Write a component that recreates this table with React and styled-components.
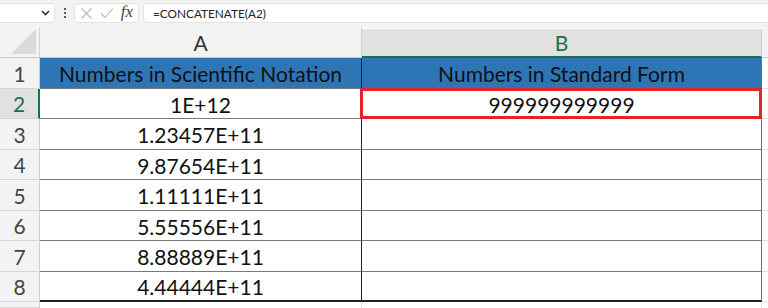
import React from 'react'
import styled, { createGlobalStyle } from 'styled-components'

const GlobalStyle = createGlobalStyle`
  html, body {
    margin: 0;
    padding: 0;
    background: #fff;
  }
  body {
    font-family: Lato, "Open Sans", sans-serif;
  }
`

const Window = styled.div`
  width: 768px;
  height: 308px;
  overflow: hidden;
  background: #f3f3f3;
`

const FormulaBar = styled.div`
  height: 28px;
  box-sizing: border-box;
  padding-top: 3px;
  display: flex;
  align-items: flex-start;
`

const Box = styled.div`
  height: 20px;
  box-sizing: border-box;
  background: #fff;
  border: 1px solid #e3e3e3;
  border-radius: 4px;
  display: flex;
  align-items: center;
`

const NameBox = styled(Box)`
  width: 59px;
  margin-left: -4px;
  justify-content: flex-end;
  padding-right: 4px;
`

const Dots = styled.div`
  width: 20px;
  display: flex;
  flex-direction: column;
  align-items: center;
  gap: 2px;
  padding-top: 5px;

  span {
    width: 2px;
    height: 2px;
    background: #5a5a5a;
  }
`

const ButtonBox = styled(Box)`
  width: 65px;
  margin-left: -1px;
  padding: 0 5px 0 5px;
  justify-content: space-between;
`

const Fx = styled.span`
  font-family: "Liberation Serif", serif;
  font-style: italic;
  font-size: 17px;
  color: #444;
  line-height: 1;
  margin-top: -3px;
`

const FormulaInput = styled(Box)`
  flex: 1;
  margin-left: 4px;
  margin-right: -6px;
  padding-left: 9px;
  font-family: Lato, "Open Sans", sans-serif;
  font-size: 11.8px;
  color: #222;
`

const Sheet = styled.div`
  display: grid;
  grid-template-columns: 40px 322px 400px 6px;
  grid-template-rows: 30px 31px 30px 31px 30px 31px 30px 31px 30px 6px;
  background: #fff;
  font-size: 21px;
`

const Corner = styled.div`
  background: #f3f3f3;
  border-right: 1px solid #d0d0d0;
  border-bottom: 1px solid #c8c8c8;
  display: flex;
  align-items: flex-end;
  justify-content: flex-end;
  padding: 0 3px 3px 0;
`

const ColHead = styled.div`
  box-sizing: border-box;
  display: flex;
  align-items: center;
  justify-content: center;
  color: ${({ $active }) => ($active ? '#1e7145' : '#333')};
  background: ${({ $active }) => ($active ? '#e1e1e1' : '#f3f3f3')};
  border-right: 1px solid #cfcfcf;
  border-bottom: ${({ $active }) => ($active ? '2px solid #1e7145' : '1px solid #c8c8c8')};
  margin-top: ${({ $active }) => ($active ? '1px' : '0')};
`

const RowHead = styled.div`
  box-sizing: border-box;
  display: flex;
  align-items: center;
  justify-content: center;
  color: ${({ $active }) => ($active ? '#1e7145' : '#444')};
  background: ${({ $active }) => ($active ? '#e1e1e1' : '#f3f3f3')};
  border-right: ${({ $active }) => ($active ? '2px solid #1e7145' : '1px solid #cfcfcf')};
  border-bottom: 1px solid #d6d6d6;
`

const Cell = styled.div`
  position: relative;
  box-sizing: border-box;
  display: flex;
  align-items: center;
  justify-content: center;
  color: #111;
  background: ${({ $head }) => ($head ? '#2e75b6' : '#fff')};
  border-right: ${({ $sep }) => ($sep ? '1.5px solid #222' : '1px solid #6e6e6e')};
  border-bottom: ${({ $last }) => ($last ? '2px solid #222' : '1px solid #7a7a7a')};
  padding-top: 1px;
`

const Grid = styled.div`
  box-sizing: border-box;
  background: #fff;
  border-right: ${({ $col }) => ($col ? '1px solid #e0e0e0' : 'none')};
  border-bottom: ${({ $row }) => ($row ? '1px solid #e0e0e0' : 'none')};
`

const EdgeHead = styled.div`
  background: #f3f3f3;
  border-bottom: 1px solid #c8c8c8;
`

const Selection = styled.div`
  position: absolute;
  top: -1px;
  left: -2px;
  right: -1px;
  bottom: -1px;
  border: 3px solid #e8212b;
  pointer-events: none;
`

const values = [
  '1E+12',
  '1.23457E+11',
  '9.87654E+11',
  '1.11111E+11',
  '5.55556E+11',
  '8.88889E+11',
  '4.44444E+11'
]

const Cross = () => (
  <svg width="13" height="13" viewBox="0 0 13 13">
    <path d="M1.5 1.5 L11.5 11.5 M11.5 1.5 L1.5 11.5" stroke="#b8b8b8" strokeWidth="1.1" fill="none" />
  </svg>
)

const Check = () => (
  <svg width="14" height="12" viewBox="0 0 14 12">
    <path d="M1 6.5 L5 10.5 L13 1.5" stroke="#b8b8b8" strokeWidth="1.1" fill="none" />
  </svg>
)

const Chevron = () => (
  <svg width="9" height="6" viewBox="0 0 9 6">
    <path d="M1 1 L4.5 4.5 L8 1" stroke="#333" strokeWidth="1.6" fill="none" />
  </svg>
)

const App = () => (
  <>
    <GlobalStyle />
    <Window>
      <FormulaBar>
        <NameBox>
          <Chevron />
        </NameBox>
        <Dots>
          <span />
          <span />
          <span />
        </Dots>
        <ButtonBox>
          <Cross />
          <Check />
          <Fx>fx</Fx>
        </ButtonBox>
        <FormulaInput>=CONCATENATE(A2)</FormulaInput>
      </FormulaBar>

      <Sheet>
        <Corner>
          <svg width="25" height="25" viewBox="0 0 25 25">
            <path d="M25 0 L25 25 L0 25 Z" fill="#dadada" />
          </svg>
        </Corner>
        <ColHead>A</ColHead>
        <ColHead $active>B</ColHead>
        <EdgeHead />

        <RowHead>1</RowHead>
        <Cell $head $sep>Numbers in Scientific Notation</Cell>
        <Cell $head>Numbers in Standard Form</Cell>
        <Grid $row />

        {values.map((v, i) => {
          const row = i + 2
          const last = row === 8
          return (
            <React.Fragment key={row}>
              <RowHead $active={row === 2}>{row}</RowHead>
              <Cell $sep $last={last}>{v}</Cell>
              <Cell $last={last}>
                {row === 2 && '999999999999'}
                {row === 2 && <Selection />}
              </Cell>
              <Grid $row />
            </React.Fragment>
          )
        })}

        <RowHead />
        <Grid $col />
        <Grid $col />
        <Grid />
      </Sheet>
    </Window>
  </>
)

export default App
